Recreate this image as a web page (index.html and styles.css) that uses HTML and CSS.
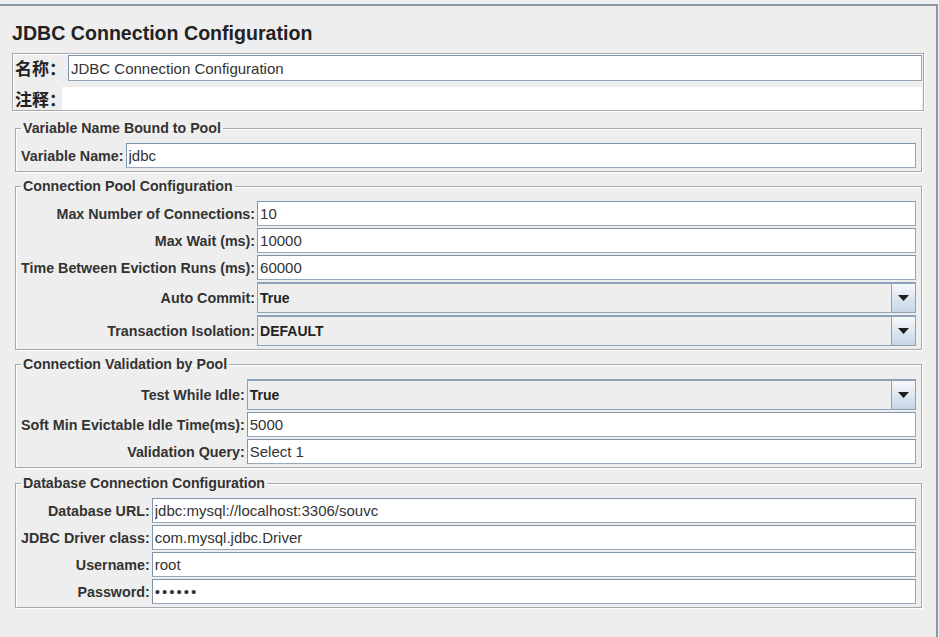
FILE: index.html
```html
<!DOCTYPE html>
<html lang="zh">
<head>
  <meta charset="UTF-8">
  <title>JDBC Connection Configuration</title>
  <link rel="stylesheet" href="styles.css">
</head>
<body>
  <div class="page">
    <h1 class="title">JDBC Connection Configuration</h1>

    <div class="namebox">
      <div class="name-row">
        <label class="cn-label name-label">名称：</label>
        <input class="field" type="text" value="JDBC Connection Configuration">
      </div>
      <div class="comment-row">
        <label class="cn-label comment-label">注释：</label>
        <textarea class="comment"></textarea>
      </div>
    </div>

    <fieldset class="group first">
      <legend>Variable Name Bound to Pool</legend>
      <div class="form">
        <label>Variable Name:</label>
        <input class="field" type="text" value="jdbc">
      </div>
    </fieldset>

    <fieldset class="group">
      <legend>Connection Pool Configuration</legend>
      <div class="form">
        <label>Max Number of Connections:</label>
        <input class="field" type="text" value="10">
        <label>Max Wait (ms):</label>
        <input class="field" type="text" value="10000">
        <label>Time Between Eviction Runs (ms):</label>
        <input class="field" type="text" value="60000">
        <label>Auto Commit:</label>
        <div class="combo">
          <span class="combo-value">True</span>
          <span class="combo-btn"><svg width="11" height="6" viewBox="0 0 11 6"><polygon points="0,0 11,0 5.5,6" fill="#1e1e1e"/></svg></span>
        </div>
        <label>Transaction Isolation:</label>
        <div class="combo">
          <span class="combo-value">DEFAULT</span>
          <span class="combo-btn"><svg width="11" height="6" viewBox="0 0 11 6"><polygon points="0,0 11,0 5.5,6" fill="#1e1e1e"/></svg></span>
        </div>
      </div>
    </fieldset>

    <fieldset class="group">
      <legend>Connection Validation by Pool</legend>
      <div class="form">
        <label>Test While Idle:</label>
        <div class="combo">
          <span class="combo-value">True</span>
          <span class="combo-btn"><svg width="11" height="6" viewBox="0 0 11 6"><polygon points="0,0 11,0 5.5,6" fill="#1e1e1e"/></svg></span>
        </div>
        <label>Soft Min Evictable Idle Time(ms):</label>
        <input class="field" type="text" value="5000">
        <label>Validation Query:</label>
        <input class="field" type="text" value="Select 1">
      </div>
    </fieldset>

    <fieldset class="group last">
      <legend>Database Connection Configuration</legend>
      <div class="form">
        <label>Database URL:</label>
        <input class="field" type="text" value="jdbc:mysql://localhost:3306/souvc">
        <label>JDBC Driver class:</label>
        <input class="field" type="text" value="com.mysql.jdbc.Driver">
        <label>Username:</label>
        <input class="field" type="text" value="root">
        <label>Password:</label>
        <input class="field password" type="password" value="123456">
      </div>
    </fieldset>
  </div>
</body>
</html>
```

FILE: styles.css
```css
body {
  margin: 0;
  background-color: #eeeeee;
  font-family: "Liberation Sans", Arial, sans-serif;
  color: #333;
}
.page {
  margin-top: 4px;
  width: 938px;
  height: 633px;
  box-sizing: border-box;
  border-top: 2px solid #8c9aa7;
  border-right: 2px solid #8c9aa7;
  overflow: hidden;
}
.title {
  margin: 15px 0 0 12px;
  font-size: 19.6px;
  line-height: 24px;
  font-weight: bold;
  color: #222;
}

/* name / comment box */
.namebox {
  margin: 8px 0 0 12px;
  width: 912px;
  box-sizing: border-box;
  border: 1px solid #a8a8a8;
  box-shadow: 1px 1px 0 #fff, inset 1px 1px 0 #fff;
  padding: 1px 1px 0 2px;
}
.name-row,
.comment-row {
  display: flex;
  align-items: center;
}
.name-row {
  height: 26px;
}
.comment-row {
  height: 23px;
  margin-top: 6px;
  align-items: flex-start;
}
.cn-label {
  font-family: "Noto Sans CJK SC", sans-serif;
  font-size: 17px;
  line-height: 20px;
  font-weight: bold;
  color: #222;
  flex: none;
  white-space: nowrap;
}
.name-label {
  width: 53px;
}
.comment-label {
  width: 47px;
  margin-top: 2px;
}
.name-row .field {
  flex: 1;
  height: 26px;
}
.comment {
  flex: 1;
  height: 23px;
  border: none;
  margin: 0;
  padding: 0;
  resize: none;
  background: #fff;
  outline: none;
}

/* titled groups */
.group {
  margin: 6px 0 0 15px;
  width: 907px;
  min-width: 0;
  box-sizing: border-box;
  border: 1px solid #a8a8a8;
  box-shadow: 1px 1px 0 #fff, inset 1px 1px 0 #fff;
  padding: 7px 5px 3px 5px;
}
.group.first {
  margin-top: 9px;
}
.group.last {
  margin-top: 7px;
}
.group legend {
  padding: 0 2px;
  font-size: 14.2px;
  line-height: 16px;
  font-weight: bold;
  color: #333;
}
.form {
  display: grid;
  grid-template-columns: max-content 1fr;
  column-gap: 2px;
  row-gap: 2px;
}
.form label {
  justify-self: end;
  align-self: center;
  font-size: 14.3px;
  font-weight: bold;
  color: #333;
  white-space: nowrap;
}

/* text field */
.field {
  height: 25px;
  box-sizing: border-box;
  margin: 0;
  padding: 0 2px;
  border: 1px solid #97a8b9;
  border-top-color: #7f94a8;
  border-left-color: #7f94a8;
  background: #fff;
  font-family: "Liberation Sans", Arial, sans-serif;
  font-size: 15px;
  color: #333;
  outline: none;
  min-width: 0;
}
.field.password {
  letter-spacing: 2px;
}

/* combo box */
.combo {
  display: flex;
  height: 31px;
  box-sizing: border-box;
  border: 1px solid #8da2b6;
  border-top: 2px solid #8da2b6;
  background: #eeeeee;
}
.combo-value {
  flex: 1;
  display: flex;
  align-items: center;
  padding-left: 2px;
  font-size: 14px;
  font-weight: bold;
  color: #222;
}
.combo-btn {
  width: 23px;
  display: flex;
  align-items: center;
  justify-content: center;
  border-left: 1px solid #8da2b6;
  background: linear-gradient(#f6f8fb, #c6d5e5);
}
```
